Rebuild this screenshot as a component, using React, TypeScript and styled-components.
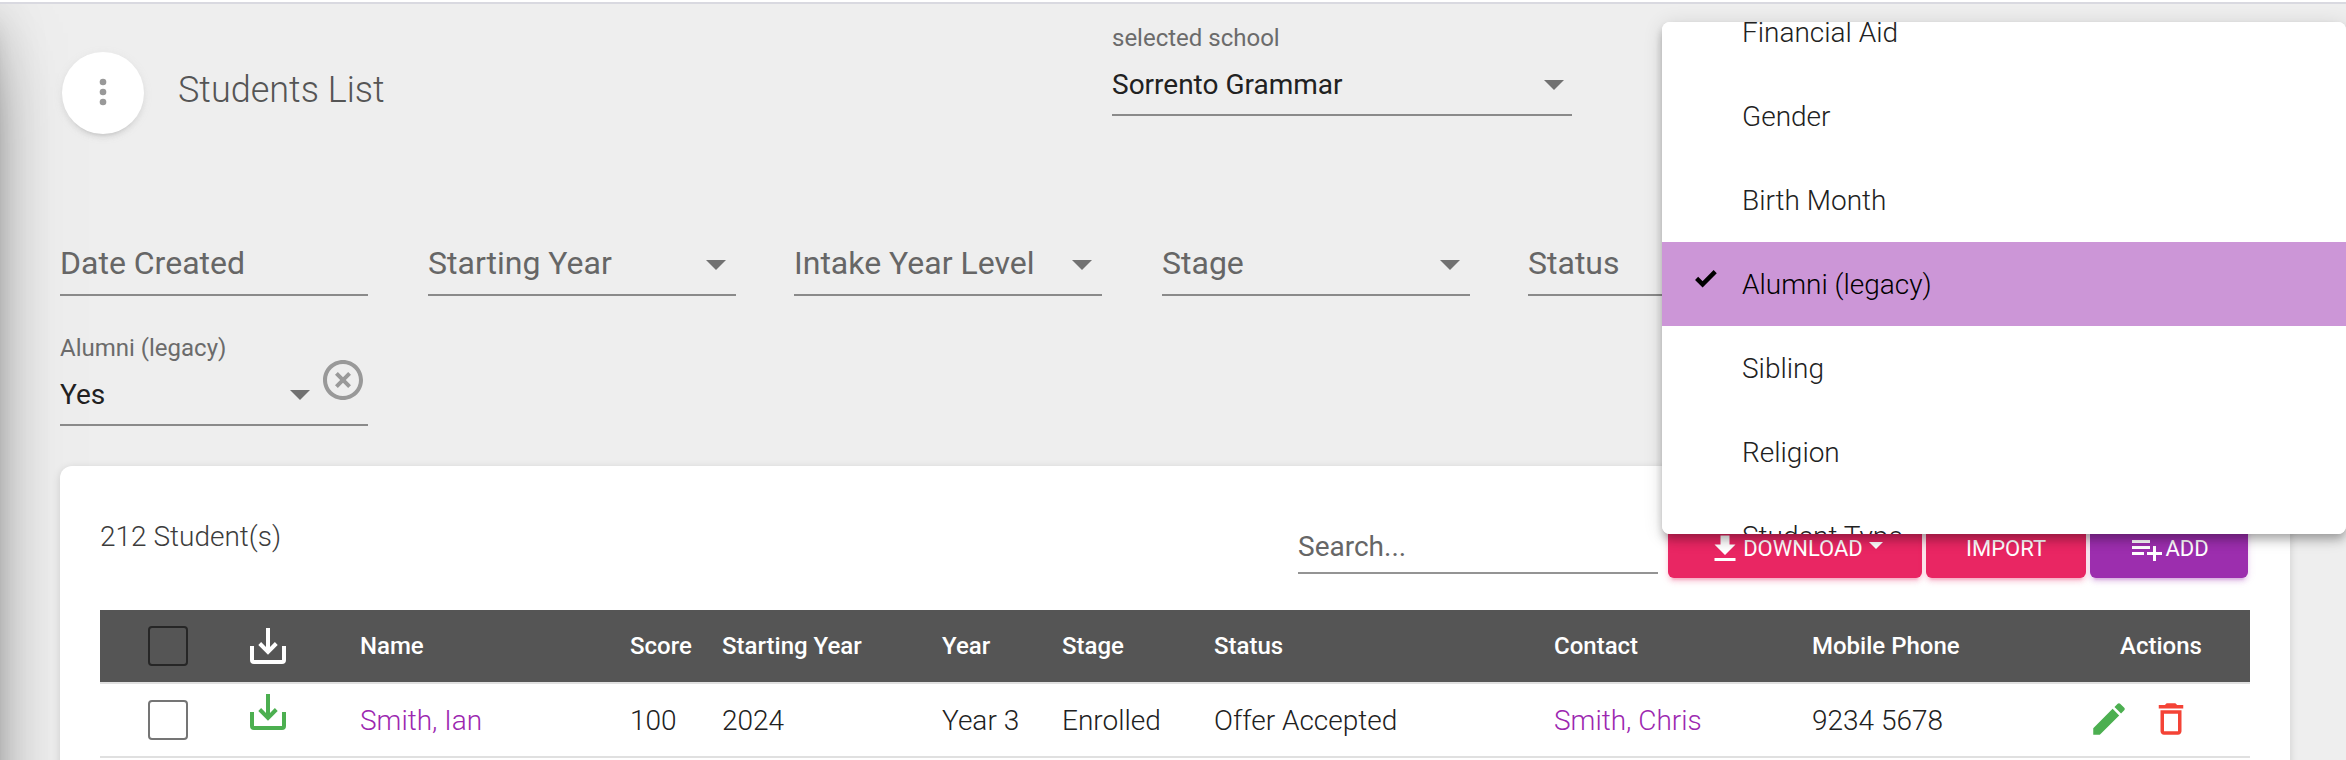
import React from "react";
import styled, { createGlobalStyle } from "styled-components";

const GlobalStyle = createGlobalStyle`
  *, *::before, *::after { box-sizing: border-box; }
  body {
    margin: 0;
    background: #eee;
    font-family: Roboto, "Liberation Sans", sans-serif;
    font-weight: 300;
    font-size: 28px;
    color: #212121;
  }
`;

const Page = styled.div`
  position: relative;
  height: 760px;
  overflow: hidden;
  background: #eee;
`;

const TopEdge = styled.div`
  position: relative;
  z-index: 1;
  height: 4px;
  background: #fff;
  border-bottom: 2px solid #d9d9e0;
`;

const SidebarEdge = styled.div`
  position: absolute;
  top: 4px;
  left: -520px;
  width: 520px;
  height: 1500px;
  box-shadow:
    0 32px 76px -24px rgba(0, 0, 0, 0.56),
    0 8px 50px 0 rgba(0, 0, 0, 0.12),
    0 16px 20px -10px rgba(0, 0, 0, 0.2);
`;

const Content = styled.div`
  position: relative;
  padding: 0 56px 0 60px;
`;

const Header = styled.header`
  display: flex;
  align-items: flex-start;
  height: 200px;
`;

const TitleGroup = styled.div`
  display: flex;
  align-items: flex-start;
  width: 1052px;
  padding: 48px 0 0 2px;
`;

const MenuButton = styled.button`
  display: flex;
  align-items: center;
  justify-content: center;
  width: 82px;
  height: 82px;
  padding: 0 0 2px;
  border: 0;
  border-radius: 50%;
  background: #fff;
  color: #999;
  box-shadow:
    0 4px 4px 0 rgba(153, 153, 153, 0.14),
    0 6px 2px -4px rgba(153, 153, 153, 0.2),
    0 2px 10px 0 rgba(153, 153, 153, 0.12);
`;

const Title = styled.h1`
  margin: 20px 0 0 34px;
  font-size: 36px;
  font-weight: 300;
  line-height: 36px;
  color: #555;
`;

const Filters = styled.section`
  display: grid;
  grid-template-columns: 368px 366px 368px 366px 308px;
  row-gap: 38px;
`;

const Field = styled.div<{ $width?: number; $top?: number }>`
  width: ${(p) => p.$width ?? 308}px;
  height: 92px;
  margin-top: ${(p) => p.$top ?? 0}px;
  border-bottom: 2px solid #8a8a8a;
`;

const FieldLabel = styled.div`
  height: 28px;
  font-size: 24px;
  font-weight: 400;
  line-height: 28px;
  color: #6b6b6b;
`;

const FieldControl = styled.div`
  display: flex;
  align-items: center;
  height: 62px;
`;

const Placeholder = styled.span`
  flex: 1;
  font-size: 32px;
  font-weight: 400;
  line-height: 40px;
  white-space: nowrap;
  color: #666;
`;

const Value = styled.span`
  flex: 1;
  padding-top: 3px;
  font-weight: 400;
  line-height: 40px;
  color: #212121;
`;

const Arrow = styled.span<{ $right?: number }>`
  margin: 4px ${(p) => p.$right ?? 10}px 0 0;
  border: 10px solid transparent;
  border-top-color: #717171;
  border-bottom: 0;
`;

const ClearIcon = styled.svg`
  width: 48px;
  height: 48px;
  margin: 0 1px 26px 9px;
  fill: #999;
`;

const Card = styled.section`
  height: 600px;
  margin-top: 40px;
  padding: 0 40px;
  border-radius: 12px;
  background: #fff;
  box-shadow: 0 2px 8px 0 rgba(0, 0, 0, 0.14);
`;

const Toolbar = styled.div`
  display: flex;
  align-items: flex-start;
  height: 144px;
  padding: 52px 2px 0 0;
`;

const Count = styled.div`
  margin-right: auto;
  line-height: 38px;
  color: #3c3c3c;
`;

const Search = styled.div`
  width: 360px;
  height: 56px;
  margin-right: 10px;
  border-bottom: 2px solid #949494;
  font-weight: 400;
  line-height: 57px;
  color: #666;
`;

const Buttons = styled.div`
  display: flex;
  gap: 4px;
`;

const Button = styled.button<{ $rgb: string; $width: number }>`
  display: flex;
  align-items: center;
  justify-content: center;
  width: ${(p) => p.$width}px;
  height: 60px;
  padding: 1px 0 0;
  border: 0;
  border-radius: 6px;
  background: rgb(${(p) => p.$rgb});
  box-shadow:
    0 4px 4px 0 rgba(${(p) => p.$rgb}, 0.14),
    0 6px 2px -4px rgba(${(p) => p.$rgb}, 0.2),
    0 2px 10px 0 rgba(${(p) => p.$rgb}, 0.12);
  font: 400 22px/30px Roboto, "Liberation Sans", sans-serif;
  color: #fff;
  svg {
    width: 36px;
    height: 36px;
    fill: #fff;
  }
`;

const Caret = styled.span`
  margin: 0 0 6px 6px;
  border: 7px solid transparent;
  border-top-color: #fff;
  border-bottom: 0;
`;

const Row = styled.div<{ $head?: boolean }>`
  display: grid;
  grid-template-columns: 102px 110px 270px 92px 220px 120px 152px 340px 258px 276px 1fr;
  align-items: center;
  height: 74px;
  padding-left: 48px;
  border-bottom: 2px solid #e0e0e0;
  background: ${(p) => (p.$head ? "#555" : "#fff")};
  font-size: ${(p) => (p.$head ? 24 : 28)}px;
  font-weight: ${(p) => (p.$head ? 500 : 300)};
  color: ${(p) => (p.$head ? "#fff" : "#212121")};
  white-space: nowrap;
`;

const Checkbox = styled.span<{ $dark?: boolean }>`
  width: 40px;
  height: 40px;
  border: 2px solid ${(p) => (p.$dark ? "#262626" : "#757575")};
  border-radius: 4px;
`;

const Tray = styled.svg<{ $color: string; $lift?: number }>`
  width: 36px;
  height: 36px;
  margin-bottom: ${(p) => p.$lift ?? 0}px;
  fill: none;
  stroke: ${(p) => p.$color};
  stroke-width: 4;
`;

const Link = styled.a`
  color: #9c27b0;
`;

const ActionsHead = styled.span`
  padding-left: 32px;
`;

const Actions = styled.span`
  display: flex;
  gap: 20px;
  margin-bottom: 2px;
  svg {
    width: 42px;
    height: 42px;
  }
`;

const Menu = styled.div`
  position: absolute;
  z-index: 2;
  top: 22px;
  left: 1662px;
  width: 684px;
  height: 512px;
  overflow: hidden;
  border-radius: 8px;
  background: #fff;
  box-shadow:
    0 4px 8px -2px rgba(0, 0, 0, 0.2),
    0 8px 10px 0 rgba(0, 0, 0, 0.14),
    0 2px 20px 0 rgba(0, 0, 0, 0.12);
`;

const MenuList = styled.div`
  margin-top: -32px;
`;

const Option = styled.div<{ $selected?: boolean }>`
  display: flex;
  align-items: center;
  height: 84px;
  background: ${(p) => (p.$selected ? "#cc96d7" : "#fff")};
  color: ${(p) => (p.$selected ? "#000" : "#212121")};
`;

const OptionMark = styled.span`
  display: flex;
  width: 80px;
  padding: 0 0 10px 33px;
`;

const options = ["Financial Aid", "Gender", "Birth Month", "Alumni (legacy)", "Sibling", "Religion", "Student Type"];

function TrayIcon({ color, lift }: { color: string; lift?: number }) {
  return (
    <Tray viewBox="0 0 36 36" $color={color} $lift={lift}>
      <path d="M18 0V23" />
      <path d="M9.7 15.5L18 23.8L26.3 15.5" />
      <path d="M2 18V32a2 2 0 0 0 2 2H32a2 2 0 0 0 2-2V18" />
    </Tray>
  );
}

function SelectFilter({ label }: { label: string }) {
  return (
    <Field>
      <FieldLabel />
      <FieldControl>
        <Placeholder>{label}</Placeholder>
        <Arrow />
      </FieldControl>
    </Field>
  );
}

export default function App() {
  return (
    <Page>
      <GlobalStyle />
      <TopEdge />
      <SidebarEdge />
      <Content>
        <Header>
          <TitleGroup>
            <MenuButton aria-label="More">
              <svg width="40" height="40" viewBox="0 0 24 24" fill="currentColor">
                <circle cx="12" cy="6" r="2" />
                <circle cx="12" cy="12" r="2" />
                <circle cx="12" cy="18" r="2" />
              </svg>
            </MenuButton>
            <Title>Students List</Title>
          </TitleGroup>
          <Field $width={460} $top={20}>
            <FieldLabel>selected school</FieldLabel>
            <FieldControl>
              <Value>Sorrento Grammar</Value>
              <Arrow $right={8} />
            </FieldControl>
          </Field>
        </Header>

        <Filters>
          <Field>
            <FieldLabel />
            <FieldControl>
              <Placeholder>Date Created</Placeholder>
            </FieldControl>
          </Field>
          <SelectFilter label="Starting Year" />
          <SelectFilter label="Intake Year Level" />
          <SelectFilter label="Stage" />
          <SelectFilter label="Status" />
          <Field>
            <FieldLabel>Alumni (legacy)</FieldLabel>
            <FieldControl>
              <Value>Yes</Value>
              <Arrow $right={0} />
              <ClearIcon viewBox="0 0 24 24">
                <path d="M14.59 8L12 10.59 9.41 8 8 9.41 10.59 12 8 14.59 9.41 16 12 13.41 14.59 16 16 14.59 13.41 12 16 9.41 14.59 8zM12 2C6.47 2 2 6.47 2 12s4.47 10 10 10 10-4.47 10-10S17.53 2 12 2zm0 18c-4.41 0-8-3.59-8-8s3.59-8 8-8 8 3.59 8 8-3.59 8-8 8z" />
              </ClearIcon>
            </FieldControl>
          </Field>
        </Filters>

        <Card>
          <Toolbar>
            <Count>212 Student(s)</Count>
            <Search>Search...</Search>
            <Buttons>
              <Button $rgb="233, 38, 99" $width={254}>
                <svg viewBox="0 0 24 24">
                  <path d="M19 9h-4V3H9v6H5l7 7 7-7zM5 18v2h14v-2H5z" />
                </svg>
                DOWNLOAD
                <Caret />
              </Button>
              <Button $rgb="233, 38, 99" $width={160}>
                IMPORT
              </Button>
              <Button $rgb="156, 46, 174" $width={158}>
                <svg viewBox="0 0 24 24">
                  <path d="M14 10H2v2h12v-2zm0-4H2v2h12V6zm4 8v-4h-2v4h-4v2h4v4h2v-4h4v-2h-4zM2 16h8v-2H2v2z" />
                </svg>
                ADD
              </Button>
            </Buttons>
          </Toolbar>

          <Row $head>
            <Checkbox $dark />
            <TrayIcon color="#fff" />
            <span>Name</span>
            <span>Score</span>
            <span>Starting Year</span>
            <span>Year</span>
            <span>Stage</span>
            <span>Status</span>
            <span>Contact</span>
            <span>Mobile Phone</span>
            <ActionsHead>Actions</ActionsHead>
          </Row>
          <Row>
            <Checkbox />
            <TrayIcon color="#4caf50" lift={16} />
            <Link>Smith, Ian</Link>
            <span>100</span>
            <span>2024</span>
            <span>Year 3</span>
            <span>Enrolled</span>
            <span>Offer Accepted</span>
            <Link>Smith, Chris</Link>
            <span>9234 5678</span>
            <Actions>
              <svg viewBox="0 0 24 24" fill="#4caf50">
                <path d="M3 17.25V21h3.75L17.81 9.94l-3.75-3.75L3 17.25zM20.71 7.04c.39-.39.39-1.02 0-1.41l-2.34-2.34c-.39-.39-1.02-.39-1.41 0l-1.83 1.83 3.75 3.75 1.83-1.83z" />
              </svg>
              <svg viewBox="0 0 24 24" fill="#f44336">
                <path d="M6 19c0 1.1.9 2 2 2h8c1.1 0 2-.9 2-2V7H6v12zM8 9h8v10H8V9zm7.5-5l-1-1h-5l-1 1H5v2h14V4z" />
              </svg>
            </Actions>
          </Row>
        </Card>
      </Content>

      <Menu>
        <MenuList>
          {options.map((name) => (
            <Option key={name} $selected={name === "Alumni (legacy)"}>
              <OptionMark>
                {name === "Alumni (legacy)" && (
                  <svg width="22" height="18" viewBox="0 0 22 18" fill="none" stroke="#000" strokeWidth="4.4">
                    <path d="M1.6 8.4L7.6 14.4L20.2 1.6" />
                  </svg>
                )}
              </OptionMark>
              {name}
            </Option>
          ))}
        </MenuList>
      </Menu>
    </Page>
  );
}
